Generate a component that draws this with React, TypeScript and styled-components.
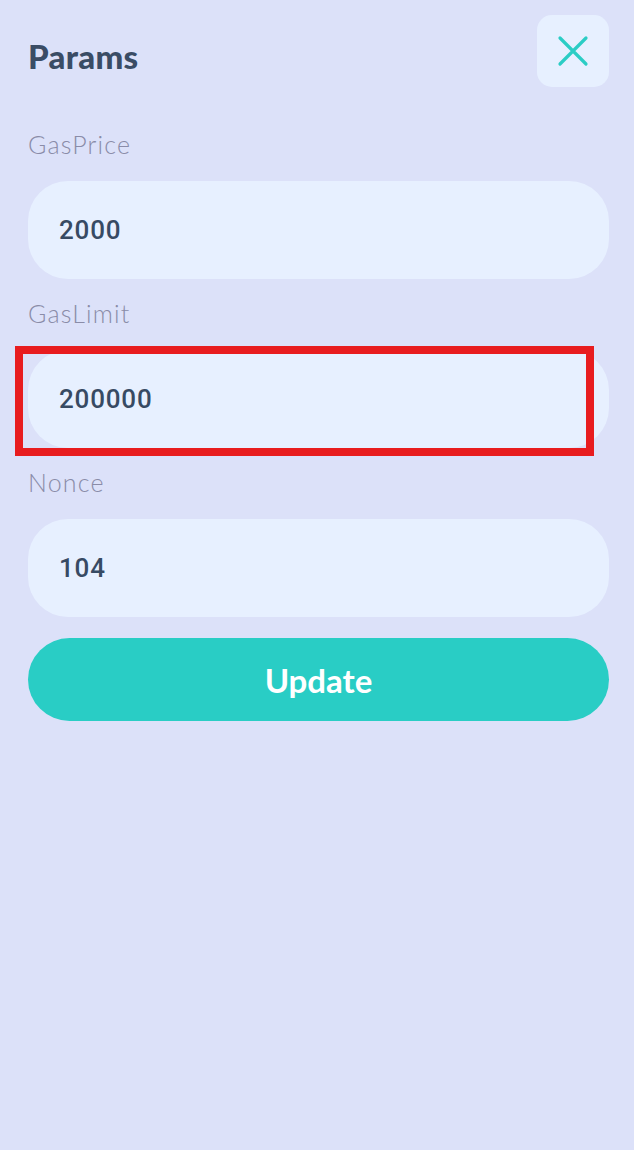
import React, { useState } from "react"
import styled, { createGlobalStyle } from "styled-components"

const GlobalStyle = createGlobalStyle`
	html, body {
		margin: 0;
		padding: 0;
		background-color: #dce1f9;
	}
	* {
		box-sizing: border-box;
	}
`

const fields = [
	{ name: "GasPrice", value: "2000" },
	{ name: "GasLimit", value: "200000", marked: true },
	{ name: "Nonce", value: "104" },
]

const App = () => {
	const [values, setValues] = useState(fields.map((f) => f.value))

	return (
		<>
			<GlobalStyle />
			<Panel>
				<Header>
					<Title>Params</Title>
					<CloseButton aria-label="close">
						<svg width="32" height="32" viewBox="0 0 32 32" fill="none">
							<path
								d="M3 3 L29 29 M29 3 L3 29"
								stroke="#2bcdc5"
								strokeWidth="3.2"
								strokeLinecap="round"
							/>
						</svg>
					</CloseButton>
				</Header>

				<Form>
					{fields.map((field, i) => (
						<Field key={field.name}>
							<Label>{field.name}</Label>
							<InputWrap>
								<Input
									value={values[i]}
									onChange={(e) => {
										const next = [...values]
										next[i] = e.target.value
										setValues(next)
									}}
								/>
								{field.marked && <Highlight />}
							</InputWrap>
						</Field>
					))}
					<UpdateButton>Update</UpdateButton>
				</Form>
			</Panel>
		</>
	)
}

const Panel = styled.div`
	min-height: 1150px;
	padding: 15px 25px 0 28px;
	background-color: #dce1f9;
	font-family: Lato, "Noto Sans", sans-serif;
`

const Header = styled.div`
	display: flex;
	align-items: center;
	justify-content: space-between;
`

const Title = styled.h1`
	margin: 0;
	padding-top: 10px;
	font-size: 33px;
	font-weight: 900;
	color: #3a4c65;
	letter-spacing: 0.3px;
`

const CloseButton = styled.button`
	width: 72px;
	height: 72px;
	border: none;
	border-radius: 15px;
	background-color: #e7f0ff;
	display: flex;
	align-items: center;
	justify-content: center;
	cursor: pointer;
	padding: 0;
`

const Form = styled.div`
	display: flex;
	flex-direction: column;
	margin-top: 41px;
`

const Field = styled.div`
	display: flex;
	flex-direction: column;
	gap: 21px;
	margin-bottom: 18px;
`

const Label = styled.label`
	font-size: 25px;
	line-height: 32px;
	font-weight: 300;
	color: #8a8ca8;
	letter-spacing: 1.2px;
`

const InputWrap = styled.div`
	position: relative;
`

const Input = styled.input`
	width: 100%;
	height: 98px;
	border: none;
	outline: none;
	border-radius: 40px;
	background-color: #e7f0ff;
	padding: 0 31px;
	font-family: Roboto, "Liberation Sans", sans-serif;
	font-size: 26px;
	font-weight: 500;
	letter-spacing: 0.8px;
	color: #374a63;
`

const Highlight = styled.div`
	position: absolute;
	top: -4px;
	bottom: -8px;
	left: -13px;
	right: 15px;
	border: 8px solid #e81c1f;
	pointer-events: none;
`

const UpdateButton = styled.button`
	margin-top: 3px;
	height: 83px;
	border: none;
	border-radius: 42px;
	background-color: #29cdc5;
	color: #ffffff;
	font-family: Lato, "Noto Sans", sans-serif;
	font-size: 33px;
	font-weight: 700;
	cursor: pointer;
`

export default App
